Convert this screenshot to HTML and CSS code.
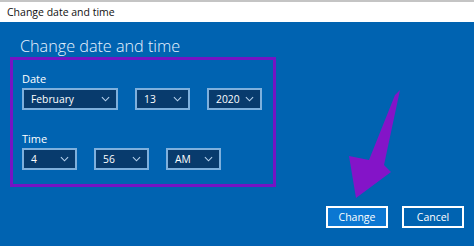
FILE: index.html
```html
<!DOCTYPE html>
<html lang="en">

<head>
  <meta charset="utf-8">
  <title>Change date and time</title>
  <link rel="stylesheet" href="styles.css">
</head>

<body>
  <div class="window">
    <div class="titlebar">Change date and time</div>
    <div class="dialog">
      <h1>Change date and time</h1>

      <div class="panel">
        <div class="field">
          <span class="label">Date</span>
          <div class="row">
            <div class="select w-month"><span>February</span><svg viewBox="0 0 10 6"><polyline points="1,1 5,5 9,1" /></svg></div>
            <div class="select w-small"><span>13</span><svg viewBox="0 0 10 6"><polyline points="1,1 5,5 9,1" /></svg></div>
            <div class="select w-small"><span>2020</span><svg viewBox="0 0 10 6"><polyline points="1,1 5,5 9,1" /></svg></div>
          </div>
        </div>

        <div class="field">
          <span class="label">Time</span>
          <div class="row">
            <div class="select w-small"><span>4</span><svg viewBox="0 0 10 6"><polyline points="1,1 5,5 9,1" /></svg></div>
            <div class="select w-small"><span>56</span><svg viewBox="0 0 10 6"><polyline points="1,1 5,5 9,1" /></svg></div>
            <div class="select w-small"><span>AM</span><svg viewBox="0 0 10 6"><polyline points="1,1 5,5 9,1" /></svg></div>
          </div>
        </div>
      </div>

      <div class="actions">
        <button class="btn btn-primary">Change</button>
        <button class="btn">Cancel</button>
      </div>

      <!-- annotation arrow pointing at the Change button -->
      <svg class="arrow" viewBox="0 0 60 112">
        <polygon points="52,0 36,75 43,82 8,108 1,66 21,70 47,5" />
      </svg>
    </div>
  </div>
</body>

</html>
```

FILE: styles.css
```css
body,
html {
  margin: 0;
  padding: 0;
  font-family: "Open Sans", "Noto Sans", sans-serif;
}

.window {
  width: 474px;
  height: 246px;
  display: flex;
  flex-direction: column;
  overflow: hidden;
}

.titlebar {
  height: 20px;
  border-top: 2px solid #c4c4c4;
  background-color: #ffffff;
  color: #111111;
  font-size: 10.5px;
  line-height: 20px;
  padding-left: 7px;
}

.dialog {
  position: relative;
  flex: 1;
  background-color: #0063b1;
  padding: 0 10px;
}

h1 {
  margin: 13px 0 0 10px;
  font-size: 16.2px;
  font-weight: 300;
  line-height: 22px;
  color: #e8f3ff;
}

.panel {
  width: 251px;
  height: 113px;
  border: 3px solid #7414c4;
  padding: 11px 0 0 9px;
  box-sizing: content-box;
  display: flex;
  flex-direction: column;
  gap: 21px;
}

.field {
  display: flex;
  flex-direction: column;
  gap: 1px;
}

.label {
  color: #ffffff;
  font-size: 11px;
  line-height: 16px;
}

.row {
  display: flex;
  gap: 17px;
}

.select {
  height: 18px;
  border: 2px solid #7eb0dd;
  background-color: #083b6d;
  color: #ffffff;
  font-size: 10.3px;
  display: flex;
  align-items: center;
  justify-content: space-between;
  padding: 0 6px 0 7px;
}

.select svg {
  width: 9px;
  height: 6px;
  fill: none;
  stroke: #b6d2ee;
  stroke-width: 1.2;
}

.w-month {
  width: 79px;
}

.w-small {
  width: 38px;
}

.actions {
  display: flex;
  justify-content: flex-end;
  gap: 14px;
  margin-top: 19px;
}

.btn {
  width: 62px;
  height: 22px;
  border: 2px solid #ffffff;
  background-color: #0063b1;
  color: #ffffff;
  font-family: "Open Sans", "Noto Sans", sans-serif;
  font-size: 10.5px;
  padding: 0;
}

.btn-primary {
  background-color: #0b77d2;
}

.arrow {
  position: absolute;
  left: 348px;
  top: 68px;
  width: 60px;
  height: 112px;
  fill: #8414c8;
}
```
